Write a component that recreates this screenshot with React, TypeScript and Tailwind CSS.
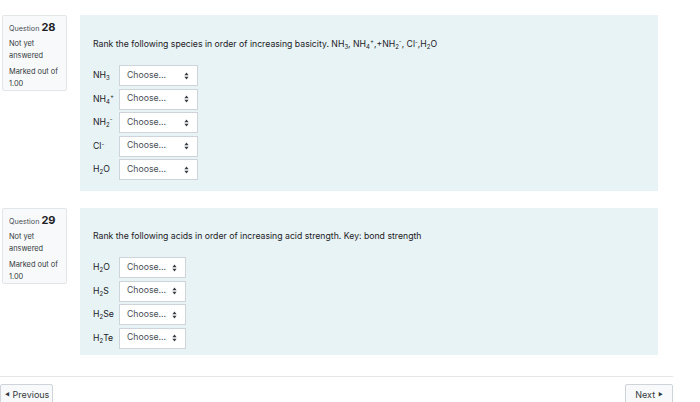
import React from 'react'

type Choice = { label: React.ReactNode }

const Sub = ({ children }: { children: React.ReactNode }) => (
  <span className="relative top-[2px] text-[6px] leading-none">{children}</span>
)
const Sup = ({ children }: { children: React.ReactNode }) => (
  <span className="relative top-[-3px] text-[6px] leading-none">{children}</span>
)

function Arrows() {
  return (
    <svg width="5" height="8" viewBox="0 0 5 8" className="shrink-0">
      <path d="M2.5 0.5 L4.6 3.3 L0.4 3.3 Z" fill="#343a40" />
      <path d="M2.5 7.5 L4.6 4.7 L0.4 4.7 Z" fill="#343a40" />
    </svg>
  )
}

function InfoBox({ num }: { num: number }) {
  return (
    <div className="w-[65px] ml-[2px] h-[76px] shrink-0 bg-[#f8f9fa] border border-[#e3e6e9] rounded-[2px] px-[6px] pt-[6px] text-[#343a40]">
      <div className="flex items-baseline gap-[2px] leading-none">
        <span className="text-[7.2px] text-[#495057]">Question</span>
        <span className="text-[11px] font-bold text-[#1d2125]">{num}</span>
      </div>
      <div className="text-[7.4px] leading-[11.5px] mt-[5px]">
        Not yet
        <br />
        answered
      </div>
      <div className="text-[7.4px] leading-[11.5px] mt-[5px]">
        Marked out of
        <br />
        1.00
      </div>
    </div>
  )
}

function Question({
  num,
  text,
  choices,
  selectWidth,
  height,
  textTop,
  listTop,
}: {
  num: number
  text: React.ReactNode
  choices: Choice[]
  selectWidth: string
  height: string
  textTop: string
  listTop: string
}) {
  return (
    <div className="flex gap-[13px]">
      <InfoBox num={num} />
      <div className={`w-[578px] ${height} bg-[#e7f3f5] pl-[13px] text-[#1d2125]`}>
        <div className={`${textTop} text-[8.7px] leading-[12px]`}>{text}</div>
        <div className={`${listTop} flex flex-col gap-[2.5px]`}>
          {choices.map((c, i) => (
            <div key={i} className="flex items-center h-[21px]">
              <div className="w-[26px] text-[8.7px] leading-none">{c.label}</div>
              <div
                className={`${selectWidth} h-[21px] bg-white border border-[#ced4da] flex items-center justify-between pl-[7px] pr-[8px] text-[8.7px] text-[#495057]`}
              >
                <span>Choose...</span>
                <Arrows />
              </div>
            </div>
          ))}
        </div>
      </div>
    </div>
  )
}

export default function App() {
  return (
    <div
      className="w-[700px] h-[402px] bg-white overflow-hidden"
      style={{ fontFamily: 'Inter, "Liberation Sans", Arial, sans-serif' }}
    >
      <div className="pt-[15px]">
        <Question
          num={28}
          height="h-[176px]"
          textTop="pt-[23px]"
          listTop="mt-[15px]"
          selectWidth="w-[79px]"
          text={
            <>
              Rank the following species in order of increasing basicity. NH<Sub>3</Sub>, NH<Sub>4</Sub>
              <Sup>+</Sup>,+NH<Sub>2</Sub>
              <Sup>-</Sup>, Cl<Sup>-</Sup>,H<Sub>2</Sub>O
            </>
          }
          choices={[
            { label: <>NH<Sub>3</Sub></> },
            { label: <>NH<Sub>4</Sub><Sup>+</Sup></> },
            { label: <>NH<Sub>2</Sub><Sup>-</Sup></> },
            { label: <>Cl<Sup>-</Sup></> },
            { label: <>H<Sub>2</Sub>O</> },
          ]}
        />
      </div>
      <div className="pt-[17px]">
        <Question
          num={29}
          height="h-[147px]"
          textTop="pt-[22px]"
          listTop="mt-[15px]"
          selectWidth="w-[67px]"
          text={<>Rank the following acids in order of increasing acid strength. Key: bond strength</>}
          choices={[
            { label: <>H<Sub>2</Sub>O</> },
            { label: <>H<Sub>2</Sub>S</> },
            { label: <>H<Sub>2</Sub>Se</> },
            { label: <>H<Sub>2</Sub>Te</> },
          ]}
        />
      </div>
      <div className="mt-[21px] w-[673px] border-t border-[#e6e6e6] pt-[7px] flex justify-between">
        <button className="h-[22px] w-[53px] border border-[#ced4da] bg-[#f8f9fa] rounded-[2px] text-[9px] text-[#343a40] flex items-center pl-[4px] gap-[3px]">
          <span className="text-[5px]">◀</span>Previous
        </button>
        <button className="h-[22px] w-[48px] border border-[#ced4da] bg-[#f8f9fa] rounded-[2px] text-[9px] text-[#343a40] flex items-center justify-center gap-[3px]">
          Next<span className="text-[5px]">▶</span>
        </button>
      </div>
    </div>
  )
}
